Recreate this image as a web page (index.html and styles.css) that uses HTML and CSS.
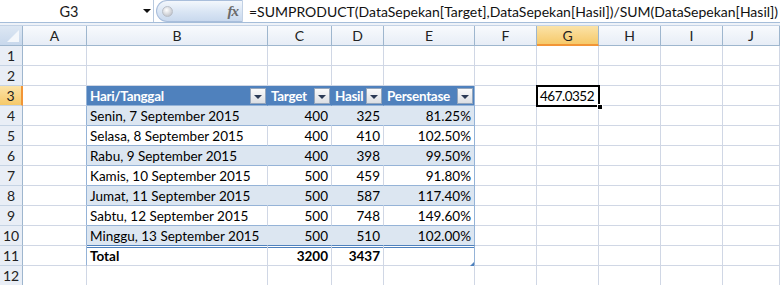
FILE: index.html
```html
<!DOCTYPE html>
<html lang="id">
<head>
    <meta charset="UTF-8">
    <title>DataSepekan</title>
    <link rel="stylesheet" href="styles.css">
</head>
<body>
    <div class="formula-bar">
        <div class="name-box">
            <span class="name-text">G3</span>
            <span class="name-arrow"></span>
        </div>
        <div class="capsule">
            <span class="knob"></span>
            <span class="fx">fx</span>
        </div>
        <div class="formula">=SUMPRODUCT(DataSepekan[Target],DataSepekan[Hasil])/SUM(DataSepekan[Hasil])</div>
    </div>

    <div class="gap"></div>

    <div class="sheet-wrap">
        <div id="sheet" class="sheet"></div>
        <div class="selection"><span class="handle"></span></div>
        <div class="resize-handle"></div>
    </div>

    <script>
        // kolom dan data tabel DataSepekan
        const cols = ['A', 'B', 'C', 'D', 'E', 'F', 'G', 'H', 'I', 'J'];
        const header = ['Hari/Tanggal', 'Target', 'Hasil', 'Persentase'];
        const data = [
            ['Senin, 7 September 2015', 400, 325, '81.25%'],
            ['Selasa, 8 September 2015', 400, 410, '102.50%'],
            ['Rabu, 9 September 2015', 400, 398, '99.50%'],
            ['Kamis, 10 September 2015', 500, 459, '91.80%'],
            ['Jumat, 11 September 2015', 500, 587, '117.40%'],
            ['Sabtu, 12 September 2015', 500, 748, '149.60%'],
            ['Minggu, 13 September 2015', 500, 510, '102.00%']
        ];
        const total = ['Total', 3200, 3437, ''];

        const sheet = document.getElementById('sheet');

        function addCell(cls, text) {
            const el = document.createElement('div');
            el.className = cls;
            if (text !== undefined) el.textContent = text;
            sheet.appendChild(el);
            return el;
        }

        // baris judul kolom
        addCell('corner').innerHTML = '<span class="corner-tri"></span>';
        cols.forEach(c => addCell('ch' + (c === 'G' ? ' ch-active' : ''), c));

        for (let r = 1; r <= 12; r++) {
            addCell('rh' + (r === 3 ? ' rh-active' : ''), r);
            cols.forEach((c, ci) => {
                const inTable = ci >= 1 && ci <= 4 && r >= 3 && r <= 11;
                if (!inTable) {
                    let cls = 'cell';
                    if (ci === 0 && r >= 3 && r <= 11) cls += ' tbl-left';
                    if (r === 3 && c === 'G') {
                        addCell(cls + ' num g3', '467.0352');
                        return;
                    }
                    addCell(cls);
                    return;
                }
                const k = ci - 1;
                let cls = 'cell';
                if (k === 3) cls += ' tbl-right';
                if (r === 3) {
                    const el = addCell(cls + ' th');
                    el.innerHTML = `<span>${header[k]}</span><span class="filter"></span>`;
                    return;
                }
                if (r === 11) {
                    addCell(cls + ' total' + (k > 0 ? ' num' : ''), total[k]);
                    return;
                }
                const row = data[r - 4];
                cls += (r % 2 === 0) ? ' band' : ' plain';
                if (r === 10) cls += ' last';
                if (k > 0) cls += ' num';
                addCell(cls, row[k]);
            });
        }
    </script>
</body>
</html>
```

FILE: styles.css
```css
* {
    margin: 0;
    padding: 0;
    box-sizing: border-box;
}

body {
    width: 780px;
    height: 285px;
    overflow: hidden;
    background: #fff;
    font-family: Lato, "Liberation Sans", sans-serif;
    font-size: 13.5px;
    color: #000;
}

/* formula bar */
.formula-bar {
    display: flex;
    height: 23px;
    border-bottom: 1px solid #a5bdd9;
    background: #fff;
}

.name-box {
    width: 154px;
    display: flex;
    align-items: center;
    border-right: 1px solid #b8c9de;
}

.name-text {
    width: 138px;
    text-align: center;
    font-size: 14.5px;
    color: #1a1a1a;
}

.name-arrow {
    width: 0;
    height: 0;
    border-left: 4px solid transparent;
    border-right: 4px solid transparent;
    border-top: 4px solid #111;
    margin-left: 5px;
}

.capsule {
    width: 87px;
    margin-left: 2px;
    display: flex;
    align-items: center;
    justify-content: space-between;
    padding: 0 4px 0 5px;
    border: 1px solid #a9bedb;
    border-right-color: #c2d1e4;
    border-radius: 11px 0 0 11px;
    background: linear-gradient(#f3f7fc, #d9e5f4 55%, #c9d9ee);
}

.knob {
    width: 11px;
    height: 11px;
    border-radius: 50%;
    background: radial-gradient(circle at 40% 35%, #fff, #c9ccd2 70%, #a9aeb7);
    border: 1px solid #b9bec6;
}

.fx {
    font-family: "Liberation Serif", serif;
    font-style: italic;
    font-weight: bold;
    font-size: 15px;
    color: #6a6a6a;
    letter-spacing: -1px;
}

.formula {
    flex: 1;
    padding-left: 6px;
    display: flex;
    align-items: center;
    font-size: 14px;
    white-space: nowrap;
    overflow: hidden;
    color: #111;
}

.gap {
    height: 3px;
    background: #eef2f8;
    border-bottom: 1px solid #c4d3e6;
}

/* lembar kerja */
.sheet-wrap {
    position: relative;
}

.sheet {
    display: grid;
    grid-template-columns: 23px 64px 181px 64px 52px 91px 62px 62px 62px 62px 57px;
    grid-auto-rows: 20px;
}

.corner,
.ch,
.rh {
    background: linear-gradient(#f8fafd, #e7edf6);
    border-right: 1px solid #9eb6ce;
    border-bottom: 1px solid #9eb6ce;
    display: flex;
    align-items: center;
    justify-content: center;
    color: #222;
    font-size: 14px;
}

.corner {
    position: relative;
    background: linear-gradient(#dde7f3, #c8d8ec);
}

.corner-tri {
    position: absolute;
    right: 3px;
    bottom: 3px;
    width: 0;
    height: 0;
    border-left: 12px solid transparent;
    border-bottom: 12px solid #f4f7fb;
}

.rh {
    background: #e9eef6;
    border-bottom-color: #c5d3e4;
}

.ch-active {
    background: linear-gradient(#fbe3a8, #f6c96a);
    border-bottom: 2px solid #f29536;
}

.rh-active {
    background: linear-gradient(#fbe3a8, #f6c96a);
    border-right: 2px solid #f29536;
}

.cell {
    border-right: 1px solid #d0d7e5;
    border-bottom: 1px solid #d0d7e5;
    padding: 0 3px;
    display: flex;
    align-items: center;
    white-space: nowrap;
    overflow: hidden;
}

.num {
    justify-content: flex-end;
}

.tbl-left {
    border-right-color: #95b3d7;
}

.th {
    background: #4f81bd;
    color: #fff;
    font-weight: bold;
    letter-spacing: -0.3px;
    justify-content: space-between;
    padding-right: 1px;
    border-right-color: #4f81bd;
    border-bottom-color: #95b3d7;
}

.filter {
    flex: none;
    width: 16px;
    height: 16px;
    border: 1px solid #95a6bc;
    background: linear-gradient(#fafafa, #dcdfe4);
    position: relative;
}

.filter::after {
    content: "";
    position: absolute;
    left: 3px;
    top: 6px;
    border-left: 4px solid transparent;
    border-right: 4px solid transparent;
    border-top: 4px solid #2b3a55;
}

.band {
    background: #dce6f1;
    border-right-color: #dce6f1;
    border-bottom-color: #95b3d7;
}

.plain {
    border-bottom-color: #95b3d7;
}

.last {
    border-bottom-color: #4f81bd;
}

.total {
    font-weight: bold;
    box-shadow: inset 0 1px 0 #fff, inset 0 2px 0 #4f81bd;
}

.tbl-right {
    border-right-color: #95b3d7;
}

.g3 {
    padding-right: 4px;
    letter-spacing: -0.5px;
}

.selection {
    position: absolute;
    left: 536px;
    top: 59px;
    width: 64px;
    height: 22px;
    border: 2px solid #000;
    pointer-events: none;
}

.handle {
    position: absolute;
    right: -5px;
    bottom: -5px;
    width: 6px;
    height: 6px;
    background: #000;
    border: 1px solid #fff;
}

.resize-handle {
    position: absolute;
    left: 470px;
    top: 236px;
    width: 0;
    height: 0;
    border-left: 4px solid transparent;
    border-bottom: 4px solid #4f81bd;
}
```
